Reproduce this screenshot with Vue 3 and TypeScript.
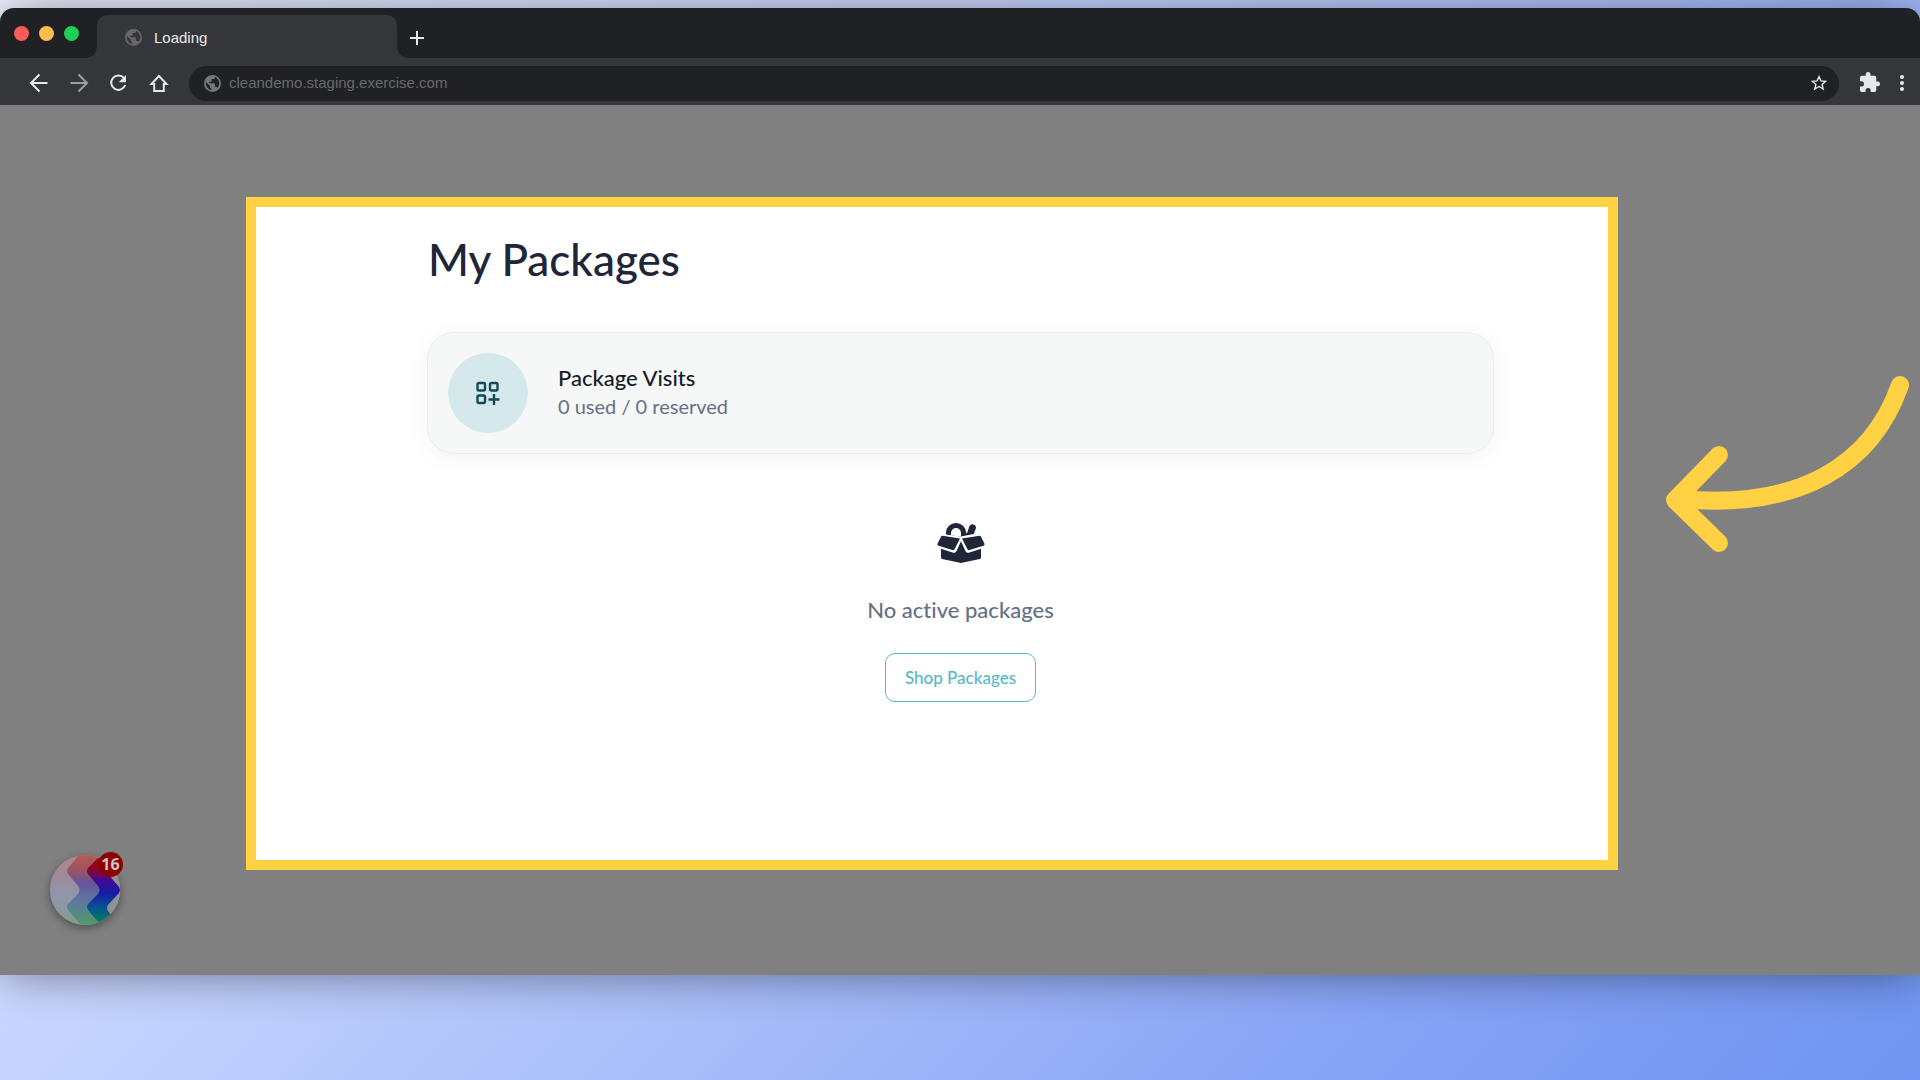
<script setup lang="ts">
import { ref } from 'vue'

const address = ref('cleandemo.staging.exercise.com')
const lights: string[] = ['#ff5c5c', '#ffbd4c', '#20cf55']
const used = ref(0)
const reserved = ref(0)
const unread = ref(16)
</script>

<template>
  <div class="desktop">
    <div class="window">
      <header class="tab-strip">
        <div class="lights">
          <span v-for="color in lights" :key="color" class="light" :style="{ background: color }"></span>
        </div>
        <div class="tab">
          <svg class="globe tab-globe" viewBox="0 0 24 24" aria-hidden="true">
            <path d="M12 0a12 12 0 1 0 0 24 12 12 0 0 0 0-24Zm-1.500 21.300A9.400 9.400 0 0 1 2.800 10l5.700 5.700v1.200a2.400 2.400 0 0 0 2 2.400ZM18.800 18.300a2.400 2.400 0 0 0-2.200-1.700h-1.200V13a1.200 1.200 0 0 0-1.200-1.200H7.200V9.400h2.400a1.200 1.200 0 0 0 1.200-1.200V5.800h2.400a2.400 2.400 0 0 0 2.400-2.400v-.5a9.500 9.500 0 0 1 3.200 15.400Z" />
          </svg>
          <span class="tab-title">Loading</span>
        </div>
        <button class="icon-button new-tab" aria-label="New tab">
          <svg width="16" height="16" viewBox="0 0 16 16"><path d="M8 1v14M1 8h14" class="line" /></svg>
        </button>
      </header>

      <nav class="toolbar">
        <div class="nav-buttons">
          <button class="icon-button" aria-label="Back">
            <svg width="20" height="20" viewBox="0 0 20 20"><path d="M18.500 10H2.500M10.500 1.500 2 10l8.500 8.500" class="line" /></svg>
          </button>
          <button class="icon-button muted" aria-label="Forward">
            <svg width="20" height="20" viewBox="0 0 20 20"><path d="M1.500 10h16M9.500 1.500 18 10l-8.500 8.500" class="line" /></svg>
          </button>
          <button class="icon-button" aria-label="Reload">
            <svg width="20" height="20" viewBox="0 0 20 20">
              <path d="M15 5.200A7.200 7.200 0 1 0 16.200 12" class="line" />
              <path d="M17 2v7.300H9.700Z" fill="currentColor" />
            </svg>
          </button>
          <button class="icon-button" aria-label="Home">
            <svg width="20" height="20" viewBox="0 0 20 20"><path d="M2.500 11 10 3l7.500 8h-2.700v7H5.200v-7Z" class="line" /></svg>
          </button>
        </div>

        <div class="address">
          <svg class="globe" viewBox="0 0 24 24" aria-hidden="true">
            <path d="M12 0a12 12 0 1 0 0 24 12 12 0 0 0 0-24Zm-1.500 21.300A9.400 9.400 0 0 1 2.800 10l5.700 5.700v1.200a2.400 2.400 0 0 0 2 2.400ZM18.800 18.300a2.400 2.400 0 0 0-2.200-1.700h-1.200V13a1.200 1.200 0 0 0-1.200-1.200H7.200V9.400h2.400a1.200 1.200 0 0 0 1.200-1.200V5.800h2.400a2.400 2.400 0 0 0 2.400-2.400v-.5a9.500 9.500 0 0 1 3.200 15.400Z" />
          </svg>
          <input v-model="address" class="address-input" type="text" aria-label="Address" />
          <button class="icon-button" aria-label="Bookmark this page">
            <svg width="16" height="16" viewBox="0 0 16 16">
              <path d="m8 1.600 1.900 4.300 4.800.4-3.600 3.100 1.100 4.600L8 11.500 3.800 14l1.100-4.600L1.300 6.300l4.800-.4Z" fill="none" stroke="currentColor" stroke-width="1.400" />
            </svg>
          </button>
        </div>

        <div class="actions">
          <button class="icon-button" aria-label="Extensions">
            <svg width="22" height="22" viewBox="1 1 23 23">
              <path fill="currentColor" d="M20.500 11H19V7a2 2 0 0 0-2-2h-4V3.500a2.500 2.500 0 0 0-5 0V5H4a2 2 0 0 0-2 2v3.800h1.500a2.700 2.700 0 0 1 0 5.400H2V20a2 2 0 0 0 2 2h3.800v-1.500a2.700 2.700 0 0 1 5.400 0V22H17a2 2 0 0 0 2-2v-4h1.500a2.500 2.500 0 0 0 0-5Z" />
            </svg>
          </button>
          <button class="icon-button" aria-label="Menu">
            <svg width="6" height="18" viewBox="0 0 6 18">
              <g fill="currentColor"><circle cx="3" cy="3" r="2" /><circle cx="3" cy="9" r="2" /><circle cx="3" cy="15" r="2" /></g>
            </svg>
          </button>
        </div>
      </nav>

      <div class="page">
        <main class="spotlight">
          <h1>My Packages</h1>

          <section class="visits">
            <div class="visits-icon">
              <svg width="24" height="24" viewBox="0 0 24 24" fill="none" stroke="#134b58" stroke-width="2.400" aria-hidden="true">
                <rect x="1.500" y="2" width="7.500" height="7.500" rx="1.500" />
                <rect x="14" y="2" width="7.500" height="7.500" rx="1.500" />
                <rect x="1.500" y="14.500" width="7.500" height="7.500" rx="1.500" />
                <path d="M18 13v11M12.500 18.500h11" />
              </svg>
            </div>
            <div class="visits-text">
              <h2>Package Visits</h2>
              <p class="visits-count">{{ used }} used / {{ reserved }} reserved</p>
            </div>
          </section>

          <section class="empty">
            <svg width="48" height="40" viewBox="0 0 48 40" fill="#202637" aria-hidden="true">
              <path d="M9 11V9.500a10 9.500 0 0 1 20 0l1 .8L32.500 3a3.500 3.500 0 0 1 6.500 2l-2.200 6-13 2.600L9 11.500Z" />
              <path d="M14 12.200V10a5 5 0 0 1 10 0v3.400L19 13Z" fill="#fff" />
              <path d="M5.500 12.800 23 15.400l-5.300 10.700q-.7 1.400-2.200 1L1.500 22.800q-1.500-.5-1-2L4 13.700q.5-1 1.500-.9Z" />
              <path d="M42.500 12.800 25 15.400l5.300 10.700q.7 1.400 2.200 1l14-4.300q1.500-.5 1-2L44 13.700q-.5-1-1.500-.9Z" />
              <path d="m4 25.800 12.300 3.900q2 .6 3-1.300L24 18.300l4.700 10.100q1 1.900 3 1.300L44 25.800v8.700q0 1.200-1.200 1.500L25 39.800q-1 .3-2 0L5.200 36Q4 35.700 4 34.500Z" />
            </svg>
            <p class="empty-text">No active packages</p>
            <button class="shop">Shop Packages</button>
          </section>
        </main>

        <svg class="arrow" width="244" height="178" viewBox="26 25 244 178" fill="none" stroke="#ffd143" stroke-width="18" stroke-linecap="round" stroke-linejoin="round" aria-hidden="true">
          <path d="M260 35C232 115 160 160 40 149" />
          <path d="M79 105 35 150l44 43" />
        </svg>

        <button class="chat" aria-label="Open messages">
          <svg width="70" height="70" viewBox="0 0 70 70" aria-hidden="true">
            <defs>
              <clipPath id="disc"><circle cx="35" cy="35" r="35" /></clipPath>
              <linearGradient id="pale" x1="0" y1="0" x2="0" y2="1">
                <stop offset="0" stop-color="#b58584" /><stop offset=".3" stop-color="#9d8b9d" /><stop offset=".6" stop-color="#8e97ab" /><stop offset="1" stop-color="#829c8d" />
              </linearGradient>
              <linearGradient id="soft" x1="0" y1="0" x2="0" y2="1">
                <stop offset="0" stop-color="#b35c55" /><stop offset=".2" stop-color="#a05361" /><stop offset=".4" stop-color="#67559b" /><stop offset=".65" stop-color="#5d77a0" /><stop offset="1" stop-color="#509a68" />
              </linearGradient>
              <linearGradient id="deep" x1="0" y1="0" x2="0" y2="1">
                <stop offset="0" stop-color="#a50000" /><stop offset=".2" stop-color="#8c0626" /><stop offset=".38" stop-color="#3a0b9b" /><stop offset=".55" stop-color="#171ca4" /><stop offset=".75" stop-color="#075390" /><stop offset="1" stop-color="#008554" />
              </linearGradient>
            </defs>
            <g clip-path="url(#disc)">
              <path d="M0 0h70v70H0Z" fill="url(#pale)" />
              <path d="M58 0h12v70H57Z" fill="#929292" />
              <path d="M29 0 18 13q-2 3 0 6l10 12q3 4 0 8L18 49q-2 3 0 6l13 15h24V0Z" fill="url(#soft)" />
              <path d="M51 0 38 13q-2 3 0 6l10 12q3 4 0 8L38 49q-2 3 0 6l13 15h18L58 56q-2-3 0-6l11-12q2-3 0-6L58 19V0Z" fill="url(#deep)" />
            </g>
          </svg>
          <span class="badge">{{ unread }}</span>
        </button>
      </div>
    </div>
  </div>
</template>

<style>
body {
  margin: 0;
}
</style>

<style scoped>
.desktop {
  box-sizing: border-box;
  display: flex;
  min-height: 100vh;
  padding: 8px 0 105px;
  background: linear-gradient(135deg, #edf1ff 0%, #c6d4fe 36%, #a8bdf9 58%, #88a4f6 79%, #6f94f1 100%);
  font-family: Lato, "Open Sans", sans-serif;
  font-variant-ligatures: none;
}

.window {
  display: flex;
  flex: 1;
  flex-direction: column;
  min-width: 0;
  border-radius: 14px 14px 0 0;
  box-shadow: 0 2px 48px -4px rgba(0, 0, 0, 0.48);
}

h1,
h2,
p {
  margin: 0;
}

button {
  font-family: inherit;
  cursor: pointer;
}

.tab-strip {
  display: flex;
  align-items: flex-end;
  height: 50px;
  border-radius: 14px 14px 0 0;
  background: #202124;
}

.lights {
  display: flex;
  align-self: center;
  gap: 10px;
  padding: 0 18px 0 14px;
}

.light {
  width: 15px;
  height: 15px;
  border-radius: 50%;
}

.tab {
  position: relative;
  display: flex;
  box-sizing: border-box;
  align-items: center;
  gap: 12px;
  width: 300px;
  height: 43px;
  padding: 2px 28px 0;
  border-radius: 10px 10px 0 0;
  background: #35363a;
}

/* Flared feet where the tab meets the toolbar */
.tab::before,
.tab::after {
  position: absolute;
  bottom: 0;
  width: 10px;
  height: 10px;
  content: "";
}

.tab::before {
  right: 100%;
  background: radial-gradient(circle at 0 0, #202124 9px, #35363a 10px);
}

.tab::after {
  left: 100%;
  background: radial-gradient(circle at 100% 0, #202124 9px, #35363a 10px);
}

.tab-title {
  color: #e8eaed;
  font: 15px/20px "Liberation Sans", Arial, sans-serif;
}

.globe {
  flex: none;
  width: 17px;
  height: 17px;
  fill: #75777b;
}

.tab-globe {
  fill: #65676b;
}

.icon-button {
  display: flex;
  flex: none;
  align-items: center;
  justify-content: center;
  width: 24px;
  height: 24px;
  padding: 0;
  border: 0;
  background: none;
  color: #e6e7e9;
}

.muted {
  color: #9c9ea2;
}

.line {
  fill: none;
  stroke: currentColor;
  stroke-width: 2;
}

.new-tab {
  margin: 0 0 8px 8px;
}

.toolbar {
  display: flex;
  box-sizing: border-box;
  align-items: center;
  height: 47px;
  padding: 3px 6px 0 27px;
  background: #35363a;
}

.nav-buttons {
  display: flex;
  gap: 16px;
}

.address {
  display: flex;
  box-sizing: border-box;
  flex: 1;
  align-items: center;
  gap: 8px;
  height: 35px;
  margin: 0 19px 0 18px;
  padding: 0 8px 0 15px;
  border-radius: 18px;
  background: #202124;
}

.address-input {
  flex: 1;
  min-width: 0;
  height: 24px;
  padding: 0;
  border: 0;
  outline: 0;
  background: none;
  color: #696a6e;
  font: 15px/24px "Liberation Sans", Arial, sans-serif;
}

.actions {
  display: flex;
  gap: 8px;
}

.page {
  position: relative;
  flex: 1;
  padding: 92px 302px 104px 246px;
  background: #808080;
}

.spotlight {
  padding: 24px 114px 158px 171px;
  border: 10px solid #ffd143;
  background: #fff;
}

h1 {
  padding-left: 1px;
  color: #202637;
  font-size: 44px;
  font-weight: 500;
  line-height: 56px;
}

.visits {
  display: flex;
  align-items: center;
  gap: 30px;
  margin-top: 45px;
  padding: 20px;
  border: 1px solid #ebeeed;
  border-radius: 27px;
  background: #f5f8f7;
  box-shadow: 0 4px 24px rgba(0, 0, 0, 0.05);
}

.visits-icon {
  display: flex;
  flex: none;
  align-items: center;
  justify-content: center;
  width: 80px;
  height: 80px;
  border-radius: 50%;
  background: #d5e8ec;
}

.visits-text {
  padding-bottom: 2px;
}

h2 {
  color: #161b2c;
  font-size: 22px;
  font-weight: 500;
  line-height: 29px;
}

.visits-count {
  color: #667085;
  font-size: 20px;
  line-height: 29px;
}

.empty {
  display: flex;
  flex-direction: column;
  align-items: center;
  margin-top: 69px;
}

.empty-text {
  margin: 32px 0 28px;
  color: #667085;
  font-size: 22px;
  font-weight: 500;
  line-height: 30px;
}

.shop {
  height: 49px;
  padding: 0 19px;
  border: 1px solid #56b7ca;
  border-radius: 10px;
  background: #fff;
  color: #56b7ca;
  font-size: 17px;
  font-weight: 500;
}

.arrow {
  position: absolute;
  top: 270px;
  right: 10px;
}

.chat {
  position: absolute;
  bottom: 50px;
  left: 50px;
  width: 70px;
  height: 70px;
  padding: 0;
  border: 0;
  border-radius: 50%;
  background: none;
  box-shadow: 0 3px 10px rgba(0, 0, 0, 0.4);
}

.chat svg {
  display: block;
}

.badge {
  position: absolute;
  top: -3px;
  right: -3px;
  width: 25px;
  height: 25px;
  border-radius: 50%;
  background: #8d0000;
  color: #d0c4c4;
  font: 700 16px/24px "Noto Sans", sans-serif;
  text-align: center;
}
</style>
